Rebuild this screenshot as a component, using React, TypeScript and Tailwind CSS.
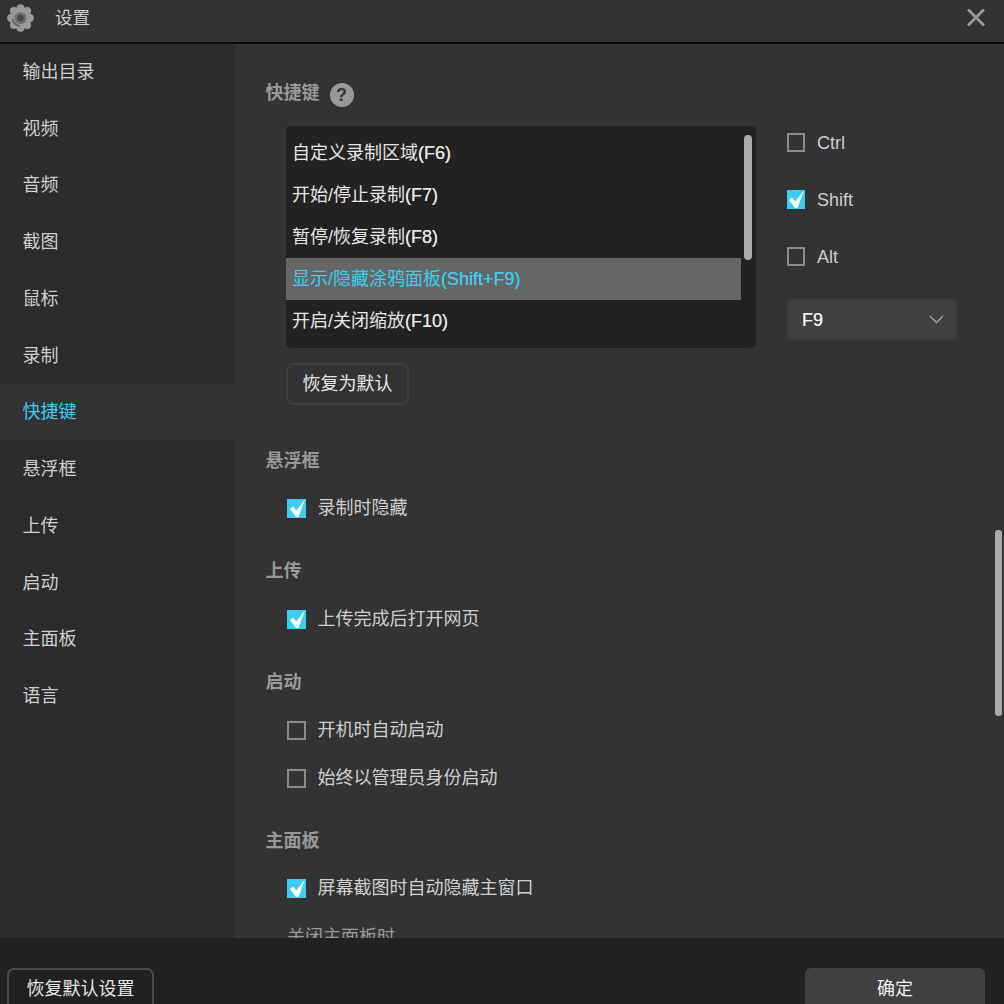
const FONT = "font-['Liberation_Sans','Noto_Sans_CJK_SC',sans-serif]";

const NAV = ['输出目录', '视频', '音频', '截图', '鼠标', '录制', '快捷键', '悬浮框', '上传', '启动', '主面板', '语言'];
const SHORTCUTS = [
  ['自定义录制区域', '(F6)'],
  ['开始/停止录制', '(F7)'],
  ['暂停/恢复录制', '(F8)'],
  ['显示/隐藏涂鸦面板', '(Shift+F9)'],
  ['开启/关闭缩放', '(F10)'],
];
const LOBES = [0, 45, 90, 135, 180, 225, 270, 315];

function Check({ on, wide }: { on?: boolean; wide?: boolean }) {
  const size = wide ? 'w-[19px]' : 'w-[18px]';
  if (on) {
    return (
      <span className={`flex h-[19px] shrink-0 items-center justify-center bg-[#3ccdf0] ${size}`}>
        <svg width="18" height="19" viewBox="0 0 18 19">
          <path d="M2 10 L5 7.6 L8.3 11.6 L16.8 0.6 L10.6 18 L8 18 Z" fill="#ffffff" />
        </svg>
      </span>
    );
  }
  return <span className={`block h-[19px] shrink-0 border-2 border-[#8a8a8a] ${size}`} />;
}

function Row({ on, label }: { on?: boolean; label: string }) {
  return (
    <div className="flex h-[24px] items-center gap-[11.5px] pl-[21.5px] text-[18px] text-[#cfcfcf]">
      <Check on={on} wide />
      <span>{label}</span>
    </div>
  );
}

function Heading({ children }: { children: string }) {
  return <div className="h-[24px] text-[18px] leading-[24px] font-bold text-[#999999]">{children}</div>;
}

function KeyOption({ on, label }: { on?: boolean; label: string }) {
  return (
    <div className="flex h-[57px] items-center gap-[12px] pt-[8px] pb-[32px] text-[18px] text-[#cfcfcf]">
      <Check on={on} />
      <span className="mt-[2px]">{label}</span>
    </div>
  );
}

export default function App() {
  return (
    <div className={`flex h-[1004px] w-[1004px] flex-col overflow-hidden bg-[#333333] ${FONT}`}>
      <header className="flex h-[44px] shrink-0 items-center border-b-2 border-[#0c0c0c] bg-[#333333]">
        <svg className="-mt-[7px] ml-[7px]" width="27" height="28" viewBox="0 0 27 28">
          <g fill="#999999">
            <circle cx="13.5" cy="14" r="10.5" />
            {LOBES.map((a) => (
              <circle
                key={a}
                cx={13.5 + 9.3 * Math.cos((a * Math.PI) / 180)}
                cy={14 + 9.8 * Math.sin((a * Math.PI) / 180)}
                r="4"
              />
            ))}
          </g>
          <circle cx="13.5" cy="14" r="6" fill="#6e6e6e" />
          <circle cx="13.5" cy="14" r="3.2" fill="#484848" />
          <path d="M5.5 15 C6.5 19 9.5 21.5 13 22" stroke="#5a5a5a" strokeWidth="1.3" fill="none" />
        </svg>
        <span className="-mt-[6px] ml-[21px] text-[17.5px] text-[#cccccc]">设置</span>
        <svg className="-mt-[7px] mr-[18px] ml-auto" width="20" height="20" viewBox="0 0 20 20" fill="none">
          <path d="M2 1.5 L18 17.5 M18 1.5 L2 17.5" stroke="#999999" strokeWidth="2.8" />
        </svg>
      </header>

      <div className="flex min-h-0 flex-1">
        <nav className="w-[235px] shrink-0 bg-[#2b2b2b]">
          <div className="-mt-px">
            {NAV.map((n) => (
              <div
                key={n}
                className={`flex h-[56.75px] items-center pt-[2px] pl-[22.5px] text-[18px] ${n === '快捷键' ? 'bg-[#333333] text-[#3ccdf0]' : 'text-[#cfcfcf]'}`}
              >
                {n}
              </div>
            ))}
          </div>
        </nav>

        <main className="relative min-w-0 flex-1 overflow-hidden pt-[37px] pl-[30.5px]">
          <div className="flex h-[24px] items-center gap-[10px]">
            <span className="text-[18px] font-bold text-[#999999]">快捷键</span>
            <span className="mt-[4px] flex h-[24px] w-[24px] items-center justify-center rounded-full bg-[#999999] text-[18px] leading-none font-bold text-[#333333]">
              ?
            </span>
          </div>

          <div className="mt-[21px] flex">
            <div className="relative ml-[20.5px] h-[222px] w-[470px] rounded-[5px] bg-[#222222] pt-[6px]">
              {SHORTCUTS.map(([zh, key], i) => (
                <div
                  key={key}
                  className={`flex h-[42px] w-[455px] items-center pl-[6px] text-[18px] ${i === 3 ? 'bg-[#666666] text-[#3ccdf0]' : 'text-[#e6e6e6]'}`}
                >
                  <span>{zh}</span>
                  <span className="[text-shadow:0_0_0.5px_currentColor]">{key}</span>
                </div>
              ))}
              <div className="absolute top-[9px] right-[4px] h-[125px] w-[8px] rounded-[4px] bg-[#aaaaaa]" />
            </div>

            <div className="ml-[31px] flex flex-col">
              <KeyOption label="Ctrl" />
              <KeyOption on label="Shift" />
              <KeyOption label="Alt" />
              <div className="mt-[3px] flex h-[39px] w-[170px] items-center justify-between rounded-[5px] bg-[#404040] pr-[13px] pl-[15px] text-[18px] text-[#f0f0f0] shadow-[0_0_0_2px_#383838] [text-shadow:0_0_0.5px_currentColor]">
                <span className="mt-[2px]">F9</span>
                <svg width="15" height="9" viewBox="0 0 15 9" fill="none">
                  <path d="M1 1 L7.5 7.5 L14 1" stroke="#999999" strokeWidth="1.6" />
                </svg>
              </div>
            </div>
          </div>

          <button className="mt-[15px] ml-[20.5px] flex h-[42px] w-[123px] items-center justify-center rounded-[7px] border-2 border-[#3f3f3f] bg-[#333333] text-[18px] text-[#e6e6e6]">
            恢复为默认
          </button>

          <div className="mt-[44px]">
            <Heading>悬浮框</Heading>
          </div>
          <div className="mt-[23px]">
            <Row on label="录制时隐藏" />
          </div>

          <div className="mt-[39px]">
            <Heading>上传</Heading>
          </div>
          <div className="mt-[24px]">
            <Row on label="上传完成后打开网页" />
          </div>

          <div className="mt-[39px]">
            <Heading>启动</Heading>
          </div>
          <div className="mt-[24px]">
            <Row label="开机时自动启动" />
          </div>
          <div className="mt-[24px]">
            <Row label="始终以管理员身份启动" />
          </div>

          <div className="mt-[39px]">
            <Heading>主面板</Heading>
          </div>
          <div className="mt-[23px]">
            <Row on label="屏幕截图时自动隐藏主窗口" />
          </div>
          <div className="mt-[24px] pl-[21.5px] text-[18px] text-[#999999]">关闭主面板时</div>

          <div className="absolute top-[486px] right-[2px] h-[186px] w-[7px] rounded-[3px] bg-[#aaaaaa]" />
        </main>
      </div>

      <footer className="flex h-[66px] shrink-0 items-start justify-between bg-[#212121] pt-[30px] pr-[19px] pl-[7px]">
        <button className="flex h-[48px] w-[147px] items-start justify-center rounded-t-[7px] border-2 border-[#4a4a4a] pt-[6px] text-[18px] text-[#e6e6e6]">
          恢复默认设置
        </button>
        <button className="flex h-[48px] w-[180px] items-start justify-center rounded-t-[6px] bg-[#404040] pt-[8px] text-[18px] text-[#f0f0f0]">
          确定
        </button>
      </footer>
    </div>
  );
}
